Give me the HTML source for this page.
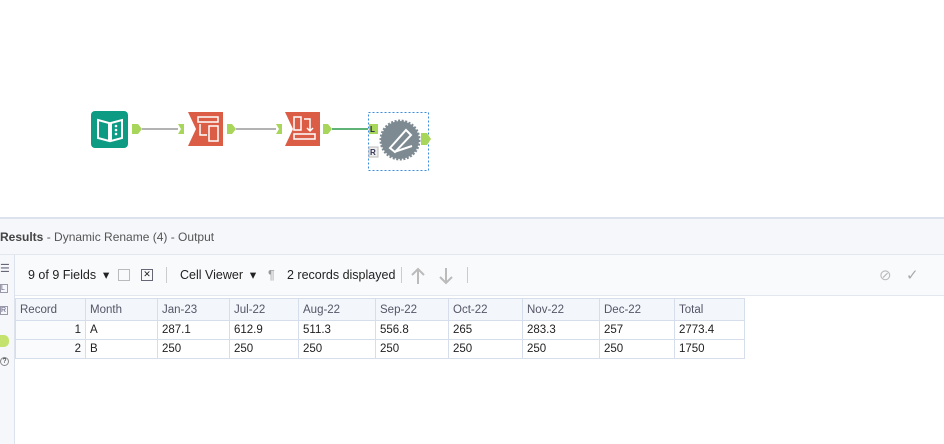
<!DOCTYPE html>
<html><head><style>
*{margin:0;padding:0;box-sizing:border-box}
body{width:944px;height:444px;background:#fff;font-family:"Liberation Sans",sans-serif;position:relative;overflow:hidden;color:#222}
.a{position:absolute}
table{border-collapse:collapse;font-size:11.5px}
td{border:1px solid #d5deea;height:19px;padding:0 4px;white-space:nowrap}
tr.h td{background:#f3f6fb;color:#556;height:22px}
.r td{background:#fff}
.r td:first-child{text-align:right;background:#fafbfd}
</style></head><body>
<div class="a" style="left:91px;top:111px;width:37px;height:37px;background:#0e9b84;border-radius:4px"></div>
<svg class="a" style="left:91px;top:111px" width="37" height="37"><path d="M7 9 L18 12 L18 30 L7 27Z M20 12 L31 9 L31 27 L20 30Z" fill="none" stroke="#fff" stroke-width="2"/><circle cx="25" cy="15" r="1.3" fill="#fff"/><circle cx="25" cy="19" r="1.3" fill="#fff"/><circle cx="25" cy="23" r="1.3" fill="#fff"/></svg>
<svg class="a" style="left:128px;top:100px" width="320" height="80">
<path d="M4 24h6l4 5-4 5H4z" fill="#a7d65a"/><line x1="14" y1="29" x2="50" y2="29" stroke="#9a9a9a" stroke-width="1.5"/><path d="M50 24h6v10h-6l3-5z" fill="#a7d65a"/>
<path d="M60 12h35v34H60l8-17z" fill="#dc5d45"/>
<rect x="70" y="17" width="20" height="5" fill="none" stroke="#fff" stroke-width="1.5"/><rect x="81" y="26" width="9" height="15" fill="none" stroke="#fff" stroke-width="1.5"/><path d="M72 24v11h7" fill="none" stroke="#fff" stroke-width="1.5"/>
<path d="M99 24h5l4 5-4 5h-5z" fill="#a7d65a"/><line x1="108" y1="29" x2="148" y2="29" stroke="#9a9a9a" stroke-width="1.5"/><path d="M148 24h6v10h-6l3-5z" fill="#a7d65a"/>
<path d="M157 12h35v34h-35l8-17z" fill="#dc5d45"/>
<rect x="166" y="17" width="7" height="13" fill="none" stroke="#fff" stroke-width="1.5"/><rect x="166" y="34" width="21" height="5" fill="none" stroke="#fff" stroke-width="1.5"/><path d="M176 19h6v11 M179 28l3 3 3-3" fill="none" stroke="#fff" stroke-width="1.5"/>
<path d="M195 24h5l4 5-4 5h-5z" fill="#a7d65a"/><line x1="204" y1="29" x2="240" y2="29" stroke="#2a9a4a" stroke-width="1.5"/>
<rect x="240.5" y="12.5" width="60" height="58" fill="none" stroke="#3b8ede" stroke-dasharray="2 2"/>
<rect x="241" y="24" width="9" height="10" fill="#a7d65a"/><text x="242" y="32" font-size="8" fill="#225" font-weight="bold">L</text>
<rect x="241" y="47" width="9" height="10" fill="#eee" stroke="#bbb"/><text x="242" y="55" font-size="8" fill="#335" font-weight="bold">R</text>
<circle cx="272" cy="40" r="19" fill="#7e8a92" stroke="#7e8a92" stroke-width="3" stroke-dasharray="2 1.5"/><path d="M262 48 L278 30 L283 35 L267 52z" fill="none" stroke="#fff" stroke-width="2"/><path d="M266 52 L284 46" stroke="#fff" stroke-width="2"/>
<path d="M293 33h6l4 6-4 6h-6z" fill="#a7d65a"/>
</svg>
<div class="a" style="left:0;top:217px;width:944px;height:2px;background:#dde3ec"></div>
<div class="a" style="left:0;top:219px;width:944px;height:36px;background:#f5f7fb;border-bottom:1px solid #e3e8ef;font-size:12px;line-height:36px;color:#555"><b style="color:#444">Results</b> - Dynamic Rename (4) - Output</div>
<div class="a" style="left:0;top:255px;width:15px;height:189px;background:#f5f7fb;border-right:1px solid #dde3ec"></div>
<div class="a" style="left:0;top:262px;font-size:11px;color:#667">☰</div>
<div class="a" style="left:0;top:284px;width:8px;height:9px;border:1px solid #99a;font-size:7px;line-height:7px;color:#557">L</div>
<div class="a" style="left:0;top:306px;width:8px;height:9px;border:1px solid #99a;font-size:7px;line-height:7px;color:#557">R</div>
<div class="a" style="left:0;top:335px;width:9px;height:12px;background:#c3e36e;border-radius:0 5px 5px 0"></div>
<div class="a" style="left:0;top:357px;width:9px;height:9px;border:1px solid #888;border-radius:50%;font-size:7px;line-height:7px;text-align:center">?</div>
<div class="a" style="left:15px;top:255px;width:929px;height:41px;background:#f9fafc;border-bottom:1px solid #e3e8ef;font-size:12.5px;line-height:41px">
<span class="a" style="left:13px">9 of 9 Fields &nbsp;▾</span>
<span class="a" style="left:103px;top:14px;width:12px;height:12px;border:1px solid #bbb"></span>
<span class="a" style="left:126px;top:14px;width:12px;height:12px;border:1.5px solid #667;font-size:9px;line-height:9px;text-align:center">✕</span>
<span class="a" style="left:151px;top:12px;width:1px;height:16px;background:#ccc"></span>
<span class="a" style="left:165px">Cell Viewer &nbsp;▾</span>
<span class="a" style="left:253px;color:#999">¶</span>
<span class="a" style="left:272px">2 records displayed</span>
<span class="a" style="left:386px;top:12px;width:1px;height:16px;background:#ccc"></span>
<svg class="a" style="left:395px;top:12px" width="50" height="18"><path d="M8 17V2 M2 8l6-6 6 6 M36 1v15 M30 10l6 6 6-6" fill="none" stroke="#bbb" stroke-width="2"/></svg>
<span class="a" style="left:452px;top:12px;width:1px;height:16px;background:#ccc"></span>
<span class="a" style="left:864px;color:#bbb;font-size:15px">⊘</span><span class="a" style="left:891px;color:#aaa;font-size:15px">✓</span>
</div>
<table class="a" style="left:15px;top:298px">
<tr class="h"><td style="width:70px">Record</td><td style="width:72px">Month</td><td style="width:72px">Jan-23</td><td style="width:69px">Jul-22</td><td style="width:77px">Aug-22</td><td style="width:73px">Sep-22</td><td style="width:74px">Oct-22</td><td style="width:77px">Nov-22</td><td style="width:75px">Dec-22</td><td style="width:70px">Total</td></tr>
<tr class="r"><td>1</td><td>A</td><td>287.1</td><td>612.9</td><td>511.3</td><td>556.8</td><td>265</td><td>283.3</td><td>257</td><td>2773.4</td></tr>
<tr class="r"><td>2</td><td>B</td><td>250</td><td>250</td><td>250</td><td>250</td><td>250</td><td>250</td><td>250</td><td>1750</td></tr>
</table>
</body></html>
